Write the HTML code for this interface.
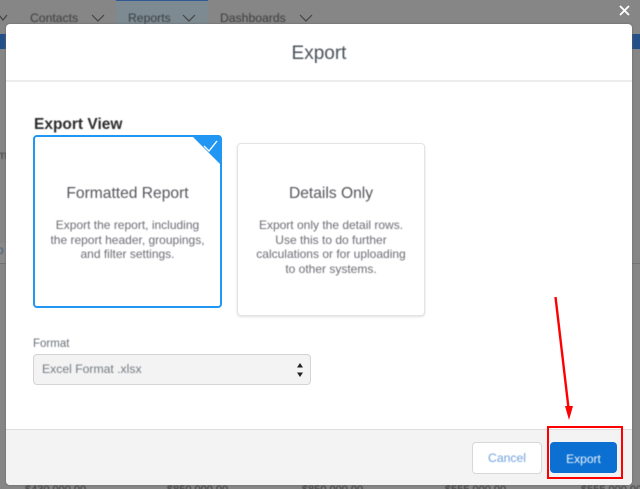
<!DOCTYPE html>
<html><head><meta charset="utf-8"><style>
html,body{margin:0;padding:0}
html{width:640px;height:489px;overflow:hidden}
body{width:640px;height:489px;overflow:hidden;position:relative;background:#868686;font-family:"Liberation Sans",sans-serif}
.a{position:absolute;white-space:nowrap}
.c{position:absolute;text-align:center;white-space:nowrap}
.bl{filter:blur(.45px)}
</style></head><body>
<div class="a" style="left:116px;top:0;width:92px;height:24px;background:#7d8a92"></div>
<div class="a" style="left:116px;top:0;width:92px;height:1px;background:#2f5a92"></div>
<div class="a" style="left:0;top:34px;width:6px;height:15px;background:#24508a"></div>
<div class="a" style="left:632px;top:34px;width:8px;height:15px;background:#24508a"></div>
<div class="a" style="left:0;top:243px;width:6px;height:20px;background:#8b8b8b"></div>
<div class="a" style="left:0;top:263px;width:6px;height:1px;background:#747474"></div>
<div class="a" style="left:632px;top:263px;width:8px;height:1px;background:#747474"></div>
<div class="a bl" style="left:-3px;top:148px;font-size:12px;color:#444">m</div>
<div class="a bl" style="left:-3px;top:243px;font-size:12px;color:#3f5f80">p</div>
<div class="a bl" style="left:30px;top:11px;font-size:12.2px;color:#3d3d3d">Contacts</div>
<div class="a bl" style="left:128px;top:11px;font-size:12.2px;color:#3a3f44">Reports</div>
<div class="a bl" style="left:220px;top:11px;font-size:12.2px;color:#3d3d3d">Dashboards</div>
<svg class="a" style="left:0;top:0" width="640" height="30" fill="none" stroke="#444" stroke-width="1.2">
<path d="M-1 15L3 20L7 15M92 15L98 21L104 15M183 15L189 21L195 15M300 15L306 21L312 15"/>
<path d="M620 6L629 15M629 6L620 15" stroke="#fff" stroke-width="1.800"/>
</svg>
<div class="a bl" style="left:25px;top:484px;font-size:11px;color:#333">$430,000.00</div>
<div class="a bl" style="left:167px;top:484px;font-size:11px;color:#333">$850,000.00</div>
<div class="a bl" style="left:302px;top:484px;font-size:11px;color:#333">$850,000.00</div>
<div class="a bl" style="left:445px;top:484px;font-size:11px;color:#333">$555,000.00</div>
<div class="a bl" style="left:581px;top:484px;font-size:11px;color:#333">$555,000.00</div>

<div class="a" style="left:6px;top:24px;width:626px;height:461px;background:#fff;border-radius:4px;overflow:hidden;box-shadow:0 0 2px #666">
<div class="a" style="left:0;top:56px;width:626px;height:2px;background:#ececec"></div>
<div class="a" style="left:0;top:405px;width:626px;height:56px;background:#f3f3f3;border-top:1px solid #dedede"></div>
</div>
<div class="c bl" style="left:6px;width:626px;top:43px;font-size:19px;color:#48505a">Export</div>
<div class="a bl" style="left:34px;top:116px;font-size:15.5px;font-weight:bold;color:#2c2a2a">Export View</div>

<div class="a" style="left:33px;top:135px;width:185px;height:169px;border:2px solid #2196f3;border-radius:4px;background:#fff"></div>
<svg class="a" style="left:190px;top:135px" width="32" height="30"><path d="M1 0H28Q31 0 31 3V30Z" fill="#2196f3"/><path d="M14 11L19 16L27 6" fill="none" stroke="#fff" stroke-width="1.4"/></svg>
<div class="c bl" style="left:33px;width:189px;top:185px;font-size:15.6px;color:#55555b">Formatted Report</div>
<div class="c bl" style="left:33px;width:189px;top:218px;font-size:12px;line-height:14.7px;color:#6c6c74">Export the report, including<br>the report header, groupings,<br>and filter settings.</div>

<div class="a" style="left:237px;top:143px;width:186px;height:171px;border:1px solid #e4e4e4;border-radius:4px;background:#fff;box-shadow:0 1px 2px #e0e0e0"></div>
<div class="c bl" style="left:237px;width:188px;top:185px;font-size:15.6px;color:#55555b">Details Only</div>
<div class="c bl" style="left:237px;width:188px;top:218px;font-size:12px;line-height:14.7px;color:#6c6c74">Export only the detail rows.<br>Use this to do further<br>calculations or for uploading<br>to other systems.</div>

<div class="a bl" style="left:33px;top:338px;font-size:11.5px;color:#6b7078">Format</div>
<div class="a" style="left:33px;top:354px;width:276px;height:29px;background:#f3f3f3;border:1px solid #d4d4d4;border-radius:4px"></div>
<div class="a bl" style="left:42px;top:362px;font-size:12.2px;color:#747a82">Excel Format .xlsx</div>
<svg class="a" style="left:295px;top:361px" width="10" height="18" fill="#222"><path d="M5 2L8 6.500H2ZM5 16L2 11.500H8Z"/></svg>

<div class="a" style="left:472px;top:442px;width:68px;height:30px;background:#fff;border:1px solid #d8d8d8;border-radius:4px"></div>
<div class="c bl" style="left:472px;width:70px;top:451px;font-size:12.2px;color:#6f9fdc">Cancel</div>
<div class="a" style="left:550px;top:442px;width:67px;height:31px;background:#0b70d2;border-radius:4px"></div>
<div class="c bl" style="left:550px;width:67px;top:452px;font-size:12px;color:#f2f6fb">Export</div>

<div class="a" style="left:547px;top:426px;width:72px;height:49px;border:2px solid #f00"></div>
<svg class="a" style="left:550px;top:290px" width="30" height="135"><path d="M5.500 7L18.500 118" stroke="#f00" stroke-width="2.400" fill="none"/><path d="M15 116H23L19 130Z" fill="#f00"/></svg>
</body></html>
